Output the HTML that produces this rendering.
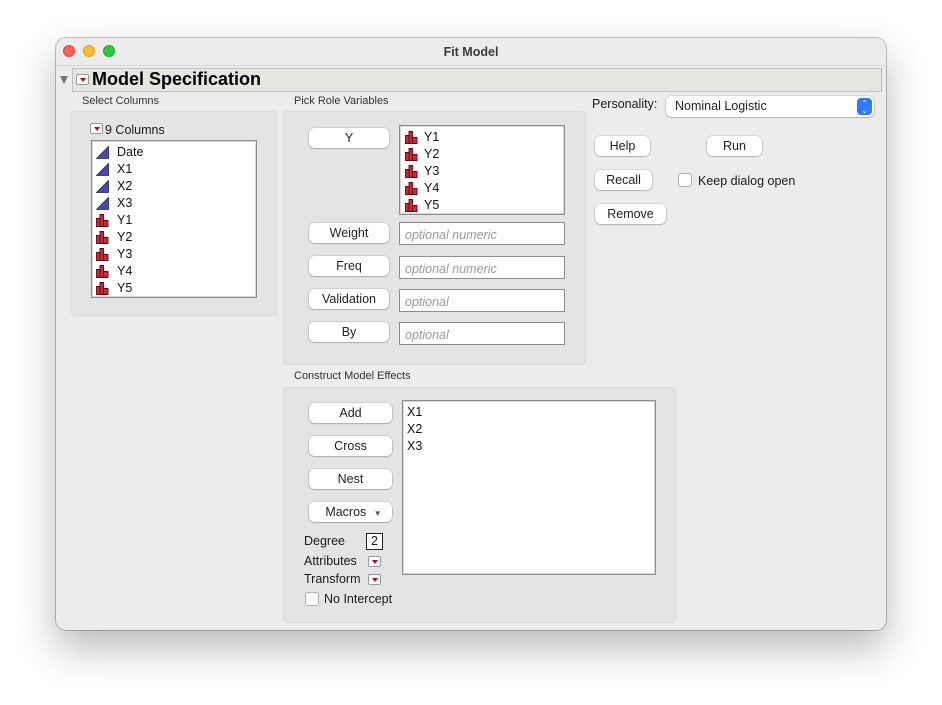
<!DOCTYPE html>
<html><head><meta charset="utf-8"><style>
*{box-sizing:border-box;margin:0;padding:0}
body{width:942px;height:705px;background:#fff;position:relative;overflow:hidden;font-family:"Liberation Sans",sans-serif;font-size:12.5px;color:#1a1a1a}
.win{position:absolute;left:56px;top:38px;width:830px;height:592px;background:#ececec;border-radius:10px;box-shadow:0 18px 40px rgba(0,0,0,.28),0 0 0 1px #c4c4c4}
.c{position:absolute;left:0;top:1px;width:830px;height:590px}
.a{position:absolute}
.tb{left:0;top:0;width:830px;height:28px;border-bottom:1px solid #d6d6d6;border-radius:10px 10px 0 0;background:#ececec}
.dot{width:12px;height:12px;border-radius:50%;top:7px}
.btn{position:absolute;background:#fff;border-radius:5px;box-shadow:0 0.5px 1.5px rgba(0,0,0,.35),0 0 0 .5px rgba(0,0,0,.12);height:20px;line-height:20px;text-align:center;font-size:12.5px;color:#222}
.panel{position:absolute;background:#e4e4e4;border:1px solid #dadada;border-radius:4px}
.lbl{position:absolute;font-size:11px;color:#333}
.list{position:absolute;background:#fff;border:1px solid #8c8c8c;box-shadow:inset 0 0 0 1px #d8d8d8}
.row{position:absolute;height:17px;line-height:17px;font-size:12.5px;color:#111}
.row svg{position:absolute;left:0;top:2px}
.inp{position:absolute;background:#fff;border:1px solid #8c8c8c;height:23px;font-style:italic;color:#999;font-size:12.5px;padding:5px 0 0 5px}
.red{position:absolute;width:13px;height:11px;background:#fff;border:1px solid #999;border-radius:2px}
.red:after{content:"";position:absolute;left:2.5px;top:3px;border-left:3.5px solid transparent;border-right:3.5px solid transparent;border-top:4px solid #c8001e}
.cb{position:absolute;width:14px;height:14px;background:#fff;border:1px solid #b0b0b0;border-radius:3px}
</style></head><body>
<svg width="0" height="0" style="position:absolute"><defs>
<symbol id="tri" viewBox="0 0 13 13"><path d="M0.5 12.5 L12.5 0.5 L12.5 12.5 Z" fill="#4a4aa8" stroke="#1c1c6c" stroke-width="0.8"/></symbol>
<symbol id="bar" viewBox="0 0 13 13"><path d="M0.5 12.5V4.5H4V12.5ZM4 12.5V0.5H7.5V12.5ZM7.5 12.5V6.5H12V12.5Z" fill="#c0303a" stroke="#6a0008" stroke-width="0.9"/></symbol>
</defs></svg>
<div class="win">
 <div class="a tb"></div>
 <div class="a dot" style="left:7px;background:#fe5f57;border:.5px solid #e0443e"></div>
 <div class="a dot" style="left:27px;background:#febc2e;border:.5px solid #dea123"></div>
 <div class="a dot" style="left:47px;background:#28c840;border:.5px solid #1aab29"></div>
 <div class="a" style="left:0;width:830px;top:7px;text-align:center;font-weight:bold;font-size:12.5px;color:#3a3a3a">Fit Model</div>
<div class="c">
 <div class="a" style="left:4px;top:37px;border-left:4.5px solid transparent;border-right:4.5px solid transparent;border-top:8px solid #777"></div>
 <div class="a" style="left:16px;top:29px;width:810px;height:24px;background:#e5e5e1;border:1px solid #c2c2c2"></div>
 <div class="red" style="left:20px;top:35px"></div>
 <div class="a" style="left:36px;top:30px;font-weight:bold;font-size:18px;color:#000">Model Specification</div>

 <div class="lbl" style="left:26px;top:56px">Select Columns</div>
 <div class="panel" style="left:15px;top:72px;width:206px;height:205px"></div>
 <div class="red" style="left:34px;top:84px"></div>
 <div class="a" style="left:49px;top:84px;font-size:12.5px">9 Columns</div>
 <div class="list" style="left:35px;top:101px;width:166px;height:158px">
  <div class="row" style="left:4px;top:3px"><svg width="13" height="13"><use href="#tri"/></svg><span style="margin-left:21px">Date</span></div>
  <div class="row" style="left:4px;top:20px"><svg width="13" height="13"><use href="#tri"/></svg><span style="margin-left:21px">X1</span></div>
  <div class="row" style="left:4px;top:37px"><svg width="13" height="13"><use href="#tri"/></svg><span style="margin-left:21px">X2</span></div>
  <div class="row" style="left:4px;top:54px"><svg width="13" height="13"><use href="#tri"/></svg><span style="margin-left:21px">X3</span></div>
  <div class="row" style="left:4px;top:71px"><svg width="13" height="13"><use href="#bar"/></svg><span style="margin-left:21px">Y1</span></div>
  <div class="row" style="left:4px;top:88px"><svg width="13" height="13"><use href="#bar"/></svg><span style="margin-left:21px">Y2</span></div>
  <div class="row" style="left:4px;top:105px"><svg width="13" height="13"><use href="#bar"/></svg><span style="margin-left:21px">Y3</span></div>
  <div class="row" style="left:4px;top:122px"><svg width="13" height="13"><use href="#bar"/></svg><span style="margin-left:21px">Y4</span></div>
  <div class="row" style="left:4px;top:139px"><svg width="13" height="13"><use href="#bar"/></svg><span style="margin-left:21px">Y5</span></div>
 </div>

 <div class="lbl" style="left:238px;top:56px">Pick Role Variables</div>
 <div class="panel" style="left:227px;top:72px;width:303px;height:254px"></div>
 <div class="btn" style="left:253px;top:89px;width:80px">Y</div>
 <div class="list" style="left:343px;top:86px;width:166px;height:90px">
  <div class="row" style="left:5px;top:3px"><svg width="13" height="13"><use href="#bar"/></svg><span style="margin-left:19px">Y1</span></div>
  <div class="row" style="left:5px;top:20px"><svg width="13" height="13"><use href="#bar"/></svg><span style="margin-left:19px">Y2</span></div>
  <div class="row" style="left:5px;top:37px"><svg width="13" height="13"><use href="#bar"/></svg><span style="margin-left:19px">Y3</span></div>
  <div class="row" style="left:5px;top:54px"><svg width="13" height="13"><use href="#bar"/></svg><span style="margin-left:19px">Y4</span></div>
  <div class="row" style="left:5px;top:71px"><svg width="13" height="13"><use href="#bar"/></svg><span style="margin-left:19px">Y5</span></div>
 </div>
 <div class="btn" style="left:253px;top:184px;width:80px">Weight</div>
 <div class="inp" style="left:343px;top:183px;width:166px">optional numeric</div>
 <div class="btn" style="left:253px;top:217px;width:80px">Freq</div>
 <div class="inp" style="left:343px;top:217px;width:166px">optional numeric</div>
 <div class="btn" style="left:253px;top:250px;width:80px">Validation</div>
 <div class="inp" style="left:343px;top:250px;width:166px">optional</div>
 <div class="btn" style="left:253px;top:283px;width:80px">By</div>
 <div class="inp" style="left:343px;top:283px;width:166px">optional</div>

 <div class="a" style="left:536px;top:58px;font-size:12.5px">Personality:</div>
 <div class="btn" style="left:610px;top:57px;width:208px;height:21px;text-align:left;padding-left:9px;line-height:21px">Nominal Logistic</div>
 <div class="a" style="left:801px;top:59px;width:15px;height:17px;background:#2f7cf6;border-radius:4px;color:#fff;font-size:8px;line-height:7px;text-align:center;padding-top:2px">&#8963;<br>&#8964;</div>
 <div class="btn" style="left:539px;top:97px;width:55px">Help</div>
 <div class="btn" style="left:651px;top:97px;width:55px">Run</div>
 <div class="btn" style="left:539px;top:131px;width:57px">Recall</div>
 <div class="cb" style="left:622px;top:134px"></div>
 <div class="a" style="left:642px;top:135px;font-size:12.5px">Keep dialog open</div>
 <div class="btn" style="left:539px;top:165px;width:71px">Remove</div>

 <div class="lbl" style="left:238px;top:331px">Construct Model Effects</div>
 <div class="panel" style="left:227px;top:348px;width:393px;height:236px"></div>
 <div class="btn" style="left:253px;top:364px;width:83px">Add</div>
 <div class="btn" style="left:253px;top:397px;width:83px">Cross</div>
 <div class="btn" style="left:253px;top:430px;width:83px">Nest</div>
 <div class="btn" style="left:253px;top:463px;width:83px;padding-left:6px">Macros <span style="font-size:8px;color:#555;margin-left:4px">&#9660;</span></div>
 <div class="a" style="left:248px;top:495px;font-size:12.5px">Degree</div>
 <div class="a" style="left:310px;top:494px;width:17px;height:17px;background:#fff;border:1px solid #222;font-size:12.5px;text-align:center;line-height:15px">2</div>
 <div class="a" style="left:248px;top:515px;font-size:12.5px">Attributes</div>
 <div class="red" style="left:312px;top:517px"></div>
 <div class="a" style="left:248px;top:533px;font-size:12.5px">Transform</div>
 <div class="red" style="left:312px;top:535px"></div>
 <div class="cb" style="left:249px;top:553px"></div>
 <div class="a" style="left:268px;top:553px;font-size:12.5px">No Intercept</div>
 <div class="list" style="left:346px;top:361px;width:254px;height:175px">
  <div class="row" style="left:4px;top:3px">X1</div>
  <div class="row" style="left:4px;top:20px">X2</div>
  <div class="row" style="left:4px;top:37px">X3</div>
 </div>
</div>
</div>
</body></html>
